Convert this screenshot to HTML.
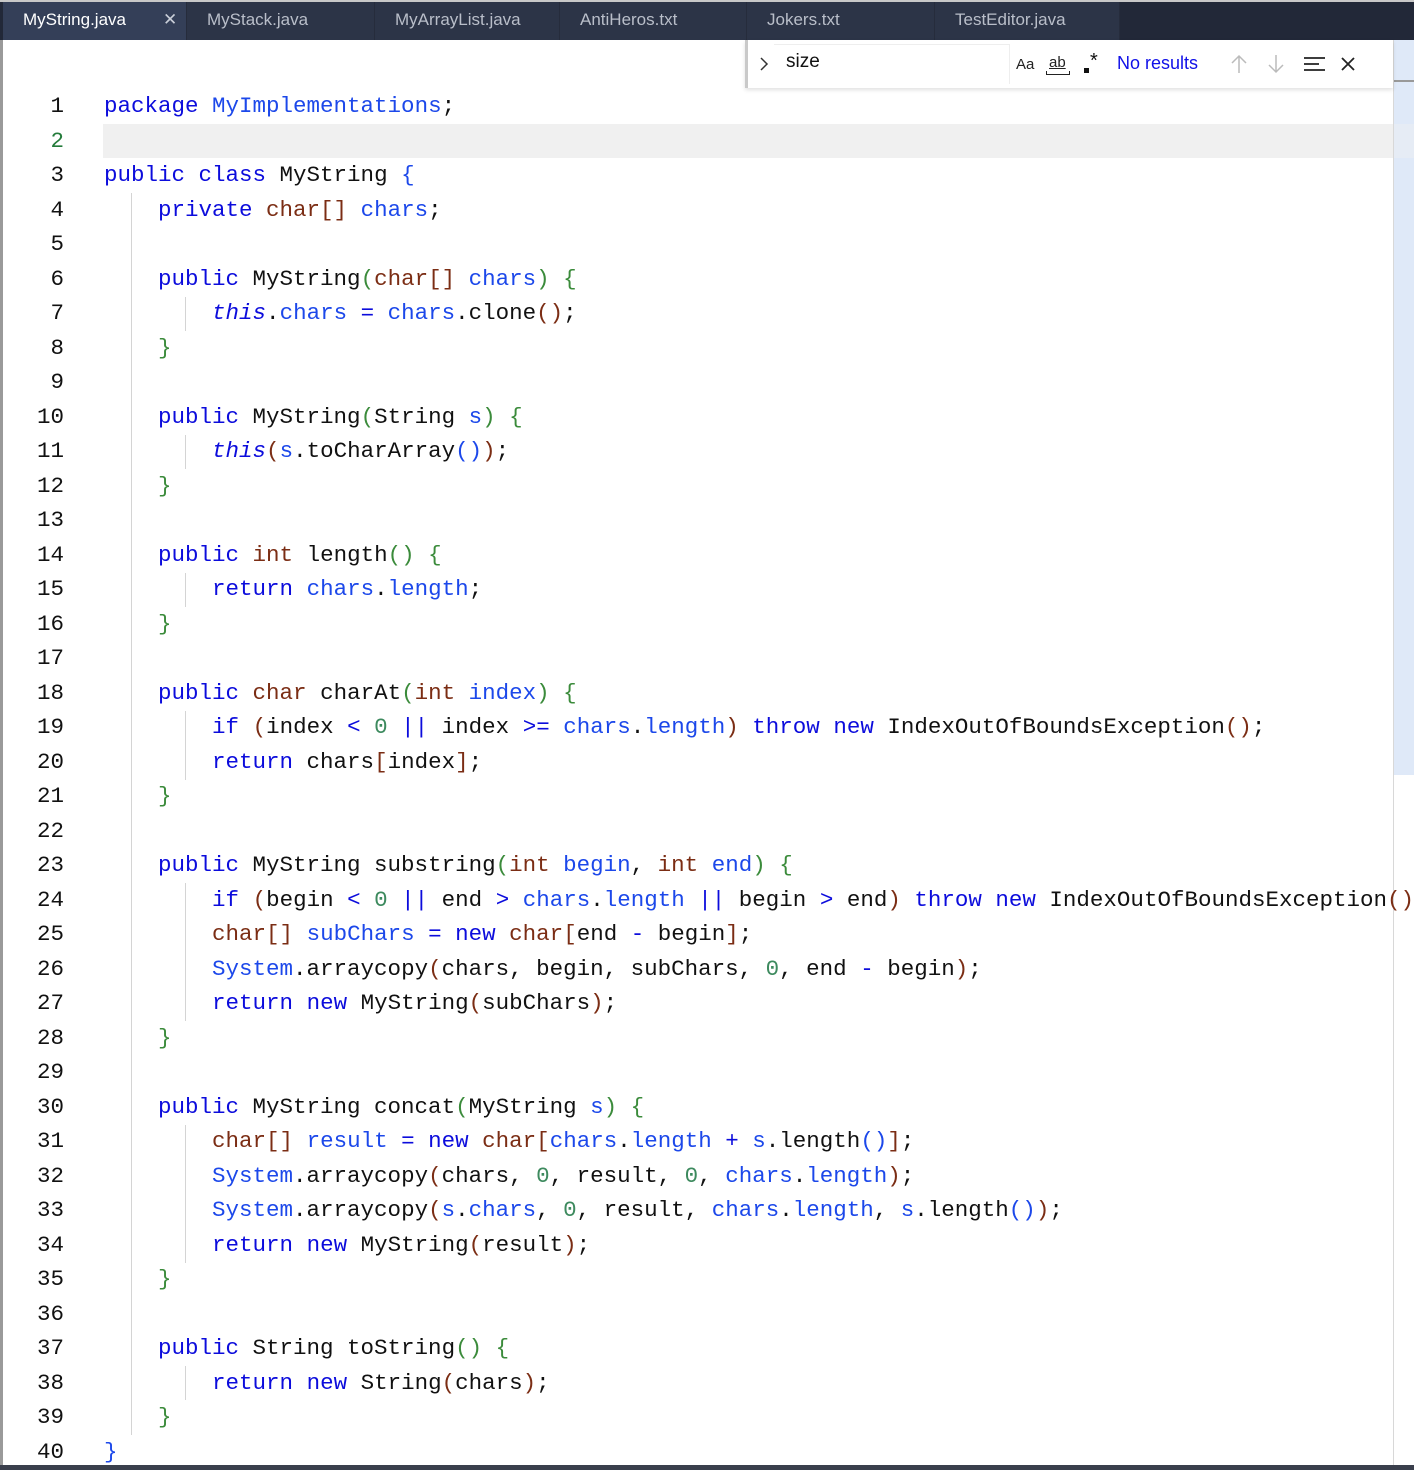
<!DOCTYPE html>
<html><head><meta charset="utf-8"><style>
*{margin:0;padding:0;box-sizing:border-box}
body{width:1414px;height:1470px;background:#fff;position:relative;overflow:hidden;font-family:"Liberation Sans",sans-serif}
.tabs{position:absolute;left:0;top:0;width:1414px;height:40px;background:#222838;border-top:2px solid #c8c8c8}
.tab{position:absolute;top:0;height:38px;background:#2c3447;color:#b9bec9;font-size:17px;line-height:36px;padding-left:20px;border-right:1px solid #262c3c}
.tab.a{background:#343f58;color:#fff}
.lb{position:absolute;left:0;top:40px;width:3px;height:1430px;background:#9a9a9a}
.bot{position:absolute;left:0;top:1465px;width:1414px;height:5px;background:#3a3f4c}
.sb{position:absolute;left:1393px;top:40px;width:21px;height:1430px;border-left:1px solid #d8d8d8;background:#fff}
.sbt{position:absolute;left:1394px;top:40px;width:20px;height:735px;background:#dfe9f8}
.hl{position:absolute;left:103px;top:124px;width:1290px;height:34px;background:#f0f0f0}
.hl2{position:absolute;left:1394px;top:124px;width:20px;height:34px;background:#e6ecf5}
.nums{position:absolute;left:0;top:89px;width:64px;text-align:right;font:22.5px/34.5px "Liberation Mono",monospace;color:#111;white-space:pre}
.code{position:absolute;left:104px;top:89px;width:1310px;font:22.5px/34.5px "Liberation Mono",monospace;color:#111;white-space:pre;overflow:hidden}
.g{position:absolute;width:1px;background:#d4d4d4}
.k{color:#0c0cdc}.v{color:#1c48ea}.t{color:#7b2d14}.gr{color:#3b8b3b}.b{color:#7b2d14}.n{color:#3d8a5e}.o{color:#1c48ea}
.i{font-style:italic;color:#0c0cdc}
.find{position:absolute;left:745px;top:40px;width:648px;height:48px;background:#fff;border-left:3px solid #c9c9c9;box-shadow:0 2px 4px rgba(0,0,0,.12)}
</style></head><body>
<div class="tabs">
<div class="tab a" style="left:3px;width:184px">MyString.java<span style="position:absolute;left:160px;color:#c9ced8">✕</span></div>
<div class="tab" style="left:187px;width:188px">MyStack.java</div>
<div class="tab" style="left:375px;width:185px">MyArrayList.java</div>
<div class="tab" style="left:560px;width:187px">AntiHeros.txt</div>
<div class="tab" style="left:747px;width:188px">Jokers.txt</div>
<div class="tab" style="left:935px;width:185px">TestEditor.java</div>
</div>
<div class="lb"></div>
<div class="sb"></div><div class="sbt"></div>
<div style="position:absolute;left:1394px;top:80px;width:20px;height:2px;background:#999"></div>
<div class="hl"></div><div class="hl2"></div>
<div class="g" style="left:131px;top:193px;height:1242px"></div>
<div class="g" style="left:185px;top:297px;height:34px"></div>
<div class="g" style="left:185px;top:435px;height:34px"></div>
<div class="g" style="left:185px;top:573px;height:34px"></div>
<div class="g" style="left:185px;top:711px;height:69px"></div>
<div class="g" style="left:185px;top:883px;height:138px"></div>
<div class="g" style="left:185px;top:1125px;height:138px"></div>
<div class="g" style="left:185px;top:1366px;height:34px"></div>
<div class="nums">1
<span style="color:#237b3a">2</span>
3
4
5
6
7
8
9
10
11
12
13
14
15
16
17
18
19
20
21
22
23
24
25
26
27
28
29
30
31
32
33
34
35
36
37
38
39
40</div>
<div class="code"><span class="k">package</span> <span class="v">MyImplementations</span>;

<span class="k">public</span> <span class="k">class</span> MyString <span class="o">{</span>
    <span class="k">private</span> <span class="t">char[]</span> <span class="v">chars</span>;

    <span class="k">public</span> MyString<span class="gr">(</span><span class="t">char[]</span> <span class="v">chars</span><span class="gr">)</span> <span class="gr">{</span>
        <span class="i">this</span>.<span class="v">chars</span> <span class="k">=</span> <span class="v">chars</span>.clone<span class="b">()</span>;
    <span class="gr">}</span>

    <span class="k">public</span> MyString<span class="gr">(</span>String <span class="v">s</span><span class="gr">)</span> <span class="gr">{</span>
        <span class="i">this</span><span class="b">(</span><span class="v">s</span>.toCharArray<span class="o">()</span><span class="b">)</span>;
    <span class="gr">}</span>

    <span class="k">public</span> <span class="t">int</span> length<span class="gr">()</span> <span class="gr">{</span>
        <span class="k">return</span> <span class="v">chars</span>.<span class="v">length</span>;
    <span class="gr">}</span>

    <span class="k">public</span> <span class="t">char</span> charAt<span class="gr">(</span><span class="t">int</span> <span class="v">index</span><span class="gr">)</span> <span class="gr">{</span>
        <span class="k">if</span> <span class="b">(</span>index <span class="k">&lt;</span> <span class="n">0</span> <span class="k">||</span> index <span class="k">&gt;=</span> <span class="v">chars</span>.<span class="v">length</span><span class="b">)</span> <span class="k">throw</span> <span class="k">new</span> IndexOutOfBoundsException<span class="b">()</span>;
        <span class="k">return</span> chars<span class="b">[</span>index<span class="b">]</span>;
    <span class="gr">}</span>

    <span class="k">public</span> MyString substring<span class="gr">(</span><span class="t">int</span> <span class="v">begin</span>, <span class="t">int</span> <span class="v">end</span><span class="gr">)</span> <span class="gr">{</span>
        <span class="k">if</span> <span class="b">(</span>begin <span class="k">&lt;</span> <span class="n">0</span> <span class="k">||</span> end <span class="k">&gt;</span> <span class="v">chars</span>.<span class="v">length</span> <span class="k">||</span> begin <span class="k">&gt;</span> end<span class="b">)</span> <span class="k">throw</span> <span class="k">new</span> IndexOutOfBoundsException<span class="b">()</span>
        <span class="t">char[]</span> <span class="v">subChars</span> <span class="k">=</span> <span class="k">new</span> <span class="t">char</span><span class="b">[</span>end <span class="k">-</span> begin<span class="b">]</span>;
        <span class="v">System</span>.arraycopy<span class="b">(</span>chars, begin, subChars, <span class="n">0</span>, end <span class="k">-</span> begin<span class="b">)</span>;
        <span class="k">return</span> <span class="k">new</span> MyString<span class="b">(</span>subChars<span class="b">)</span>;
    <span class="gr">}</span>

    <span class="k">public</span> MyString concat<span class="gr">(</span>MyString <span class="v">s</span><span class="gr">)</span> <span class="gr">{</span>
        <span class="t">char[]</span> <span class="v">result</span> <span class="k">=</span> <span class="k">new</span> <span class="t">char</span><span class="b">[</span><span class="v">chars</span>.<span class="v">length</span> <span class="k">+</span> <span class="v">s</span>.length<span class="o">()</span><span class="b">]</span>;
        <span class="v">System</span>.arraycopy<span class="b">(</span>chars, <span class="n">0</span>, result, <span class="n">0</span>, <span class="v">chars</span>.<span class="v">length</span><span class="b">)</span>;
        <span class="v">System</span>.arraycopy<span class="b">(</span><span class="v">s</span>.<span class="v">chars</span>, <span class="n">0</span>, result, <span class="v">chars</span>.<span class="v">length</span>, <span class="v">s</span>.length<span class="o">()</span><span class="b">)</span>;
        <span class="k">return</span> <span class="k">new</span> MyString<span class="b">(</span>result<span class="b">)</span>;
    <span class="gr">}</span>

    <span class="k">public</span> String toString<span class="gr">()</span> <span class="gr">{</span>
        <span class="k">return</span> <span class="k">new</span> String<span class="b">(</span>chars<span class="b">)</span>;
    <span class="gr">}</span>
<span class="o">}</span></div>
<div class="find">
<svg style="position:absolute;left:10px;top:16px" width="12" height="16"><path d="M3 2 L9 8 L3 14" fill="none" stroke="#333" stroke-width="1.5"/></svg>
<div style="position:absolute;left:26px;top:4px;width:236px;height:40px;border-top:1px solid #eee;border-right:1px solid #eee"></div>
<div style="position:absolute;left:38px;top:11px;font-size:19px;color:#111">size</div>
<div style="position:absolute;left:268px;top:16px;font-size:15px;color:#222">Aa</div>
<div style="position:absolute;left:301px;top:14px;font-size:15px;color:#222;text-decoration:underline">ab</div>
<div style="position:absolute;left:298px;top:31px;width:24px;height:4px;border:1px solid #222;border-top:none"></div>
<div style="position:absolute;left:336px;top:28px;width:5px;height:5px;background:#111"></div>
<div style="position:absolute;left:342px;top:10px;font-size:20px;color:#111">*</div>
<div style="position:absolute;left:369px;top:13px;font-size:18px;color:#1010e8">No results</div>
<svg style="position:absolute;left:482px;top:14px" width="18" height="20"><path d="M9 2 V19 M2 9 L9 2 L16 9" fill="none" stroke="#bbb" stroke-width="1.5"/></svg>
<svg style="position:absolute;left:519px;top:14px" width="18" height="20"><path d="M9 1 V18 M2 11 L9 18 L16 11" fill="none" stroke="#bbb" stroke-width="1.5"/></svg>
<svg style="position:absolute;left:555px;top:16px" width="24" height="16"><path d="M1 2 H22 M1 8 H16 M1 14 H22" fill="none" stroke="#222" stroke-width="1.8"/></svg>
<svg style="position:absolute;left:592px;top:16px" width="16" height="16"><path d="M2 2 L14 14 M14 2 L2 14" fill="none" stroke="#222" stroke-width="1.8"/></svg>
</div>
<div class="bot"></div>
</body></html>
